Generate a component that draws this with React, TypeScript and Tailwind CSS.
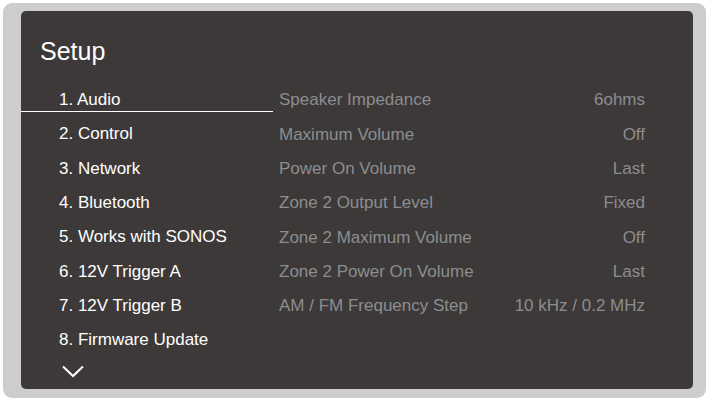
const menu = [
  "1. Audio",
  "2. Control",
  "3. Network",
  "4. Bluetooth",
  "5. Works with SONOS",
  "6. 12V Trigger A",
  "7. 12V Trigger B",
  "8. Firmware Update",
];

const settings: [string, string][] = [
  ["Speaker Impedance", "6ohms"],
  ["Maximum Volume", "Off"],
  ["Power On Volume", "Last"],
  ["Zone 2 Output Level", "Fixed"],
  ["Zone 2 Maximum Volume", "Off"],
  ["Zone 2 Power On Volume", "Last"],
  ["AM / FM Frequency Step", "10 kHz / 0.2 MHz"],
];

export default function App() {
  return (
    <div
      className="h-[403px] w-[709px] bg-white p-[3px]"
      style={{ fontFamily: '"Liberation Sans", Arial, sans-serif' }}
    >
      <div className="h-[395px] rounded-[9px] bg-[#cdcdcd] pb-[9px] pl-[18px] pr-[13px] pt-[8px]">
        <div className="h-full rounded-[5px] bg-[#3d3938] pt-[26px]">
          <h1 className="pl-[19px] text-[25px] leading-[28px] text-white">Setup</h1>
          <div className="mt-[18px] flex">
            <ul className="w-[252px]">
              {menu.map((item, i) => (
                <li key={item} className="flex h-[34.3px] items-center">
                  <span
                    className={
                      i === 0
                        ? "block h-[24px] w-full border-b border-white pl-[38px] text-[17px] leading-[24px] text-white"
                        : "block h-[24px] w-full pl-[38px] text-[17px] leading-[24px] text-white"
                    }
                  >
                    {item}
                  </span>
                </li>
              ))}
              <li className="h-[34.3px] pl-[41px] pt-[8px]">
                <svg width="22" height="13" viewBox="0 0 22 13" fill="none">
                  <path d="M1 1.5 L11 11 L21 1.5" stroke="white" strokeWidth="2" />
                </svg>
              </li>
            </ul>
            <ul className="ml-[6px] w-[366px]">
              {settings.map(([label, value]) => (
                <li
                  key={label}
                  className="flex h-[34.3px] items-center justify-between text-[17px] text-[#8b8d90]"
                >
                  <span>{label}</span>
                  <span>{value}</span>
                </li>
              ))}
            </ul>
          </div>
        </div>
      </div>
    </div>
  );
}
